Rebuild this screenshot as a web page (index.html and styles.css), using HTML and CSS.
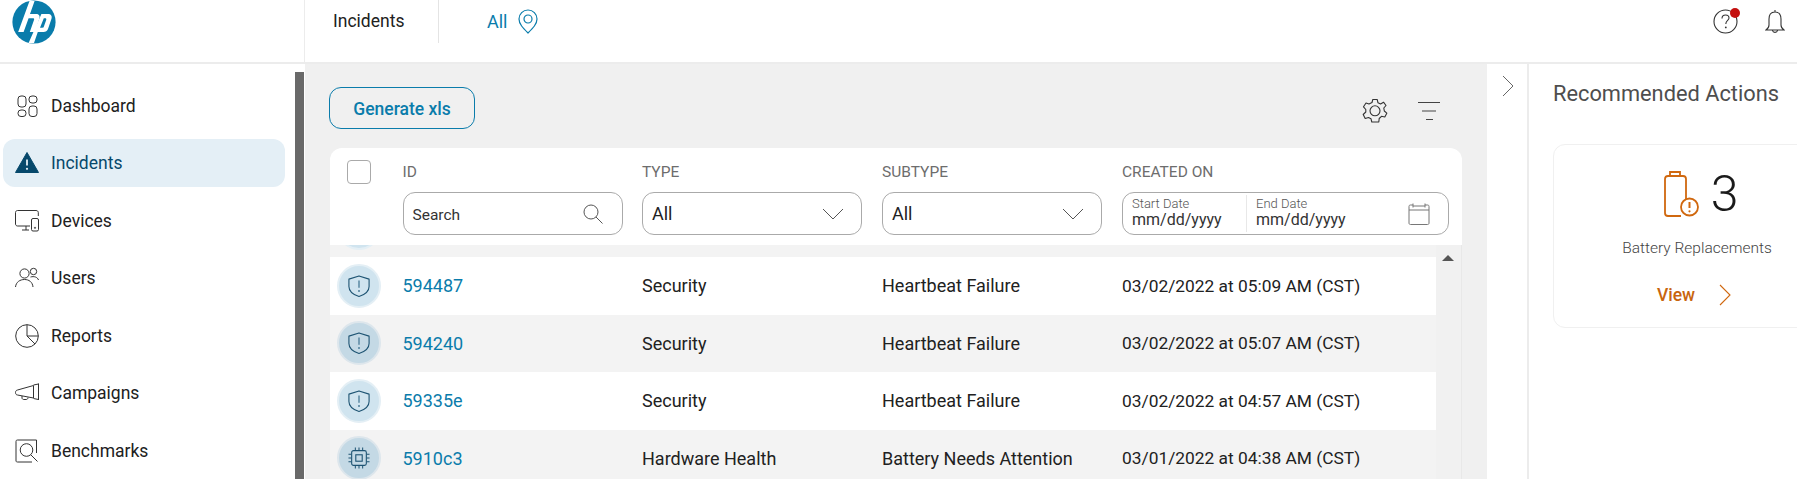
FILE: index.html
```html
<!DOCTYPE html>
<html lang="en">
<head>
<meta charset="utf-8">
<title>Incidents</title>
<link rel="stylesheet" href="styles.css">
</head>
<body>
<svg class="defs" width="0" height="0" aria-hidden="true">
  <symbol id="shield" viewBox="0 0 24 24">
    <path d="M12 1 L23 4.500 V12.500 C23 17.500 18 21.500 12 23.500 C6 21.500 1 17.500 1 12.500 V4.500 Z" fill="none" stroke="currentColor" stroke-width="1.200" stroke-linejoin="round"/>
    <path d="M12 6 V14" stroke="#4f7f9b" stroke-width="1.500" fill="none"/>
    <circle cx="12" cy="17.500" r="1.100" fill="#4f7f9b"/>
  </symbol>
  <symbol id="chip" viewBox="0 0 24 24">
    <rect x="4" y="4" width="16" height="16" rx="2" fill="none" stroke="currentColor" stroke-width="1.200"/>
    <rect x="8.500" y="8.500" width="7" height="7" fill="none" stroke="currentColor" stroke-width="1.200"/>
    <path d="M8 0.500V3.500M12 0.500V3.500M16 0.500V3.500M8 20.500V23.500M12 20.500V23.500M16 20.500V23.500M0.500 8H3.500M0.500 12H3.500M0.500 16H3.500M20.500 8H23.500M20.500 12H23.500M20.500 16H23.500" stroke="currentColor" stroke-width="1.100" fill="none"/>
  </symbol>
  <symbol id="chev-down" viewBox="0 0 22 12">
    <path d="M1 1 L11 11 L21 1" fill="none" stroke="currentColor" stroke-width="1"/>
  </symbol>
</svg>

<div class="app">
  <header class="topbar">
    <div class="brand">
      <svg class="logo" viewBox="0 0 44 44" width="44" height="44" role="img" aria-label="HP">
        <circle cx="22" cy="22" r="21.600" fill="#0a7cab"/>
        <path fill="#fff" d="M17.500 1 L22.600 1 L18 14 H24 C27 14 28.200 16 27.400 18.600 L22.800 32 H17.800 L22 20 C22.500 18.700 22 18.200 20.800 18.200 H16.600 L11.600 32 H6.200 Z"/>
        <path fill="#fff" fill-rule="evenodd" d="M29.400 14 H35.800 C39 14 40.400 16 39.400 19 L36 29 C35.300 31 33.600 32 31.600 32 H25.800 L22 43 H16.600 Z M31.800 18.200 L28 27.800 H30.400 C31.200 27.800 31.600 27.400 31.900 26.600 L34.200 20 C34.600 18.800 34.200 18.200 33.200 18.200 Z"/>
      </svg>
    </div>
    <div class="page-title">Incidents</div>
    <div class="location">
      <span>All</span>
      <svg viewBox="0 0 20 25" width="20" height="25"><path d="M10 24 C5 19 1 15 1 10 A9 9 0 0 1 19 10 C19 15 15 19 10 24 Z" fill="none" stroke="currentColor" stroke-width="1.200"/><circle cx="10" cy="10" r="4" fill="none" stroke="currentColor" stroke-width="1.200"/></svg>
    </div>
    <div class="top-actions">
      <div class="help">
        <svg viewBox="0 0 25 25" width="25" height="25"><circle cx="12.500" cy="12.500" r="11.500" fill="none" stroke="#333" stroke-width="1.100"/><path d="M9 9.500 C9 7 11 6 12.600 6 C14.600 6 16 7.400 16 9 C16 11.400 12.800 11.600 12.800 15" fill="none" stroke="#333" stroke-width="1.100"/><circle cx="12.800" cy="18.400" r="0.900" fill="#333"/></svg>
        <span class="dot"></span>
      </div>
      <svg viewBox="0 0 20 25" width="20" height="25"><path d="M10 1 V3 M10 3 C5.500 3 4 6.500 4 10 V16 C4 18.500 2.500 20 1 21 H19 C17.500 20 16 18.500 16 16 V10 C16 6.500 14.500 3 10 3 Z M7.500 21.500 C8 24 12 24 12.500 21.500" fill="none" stroke="#333" stroke-width="1.100"/></svg>
    </div>
  </header>

  <div class="content">
    <aside class="sidebar">
      <nav class="nav">
        <a class="nav-item">
          <svg viewBox="0 0 24 24" width="24" height="24"><rect x="3" y="2" width="8" height="11" rx="3"/><rect x="14" y="2" width="8" height="7" rx="3"/><rect x="3" y="16" width="8" height="6.500" rx="3"/><rect x="14" y="12" width="8" height="10.500" rx="3"/></svg>
          Dashboard
        </a>
        <a class="nav-item active">
          <svg viewBox="0 0 24 24" width="24" height="24"><path class="solid" d="M12 1.500 L23.500 21.500 H0.500 Z"/><path d="M12 8.500 V14.500" stroke="#e4eff6" stroke-width="1.800"/><circle cx="12" cy="17.800" r="1.100" fill="#e4eff6" stroke="none"/></svg>
          Incidents
        </a>
        <a class="nav-item">
          <svg viewBox="0 0 24 24" width="24" height="24"><path d="M15 17 H2.500 C1.500 17 0.500 16.200 0.500 15 V3.500 C0.500 2.300 1.500 1.500 2.500 1.500 H21 C22.300 1.500 23.300 2.300 23.300 3.500 V7"/><path d="M11 17 V21 M7 21 H14"/><rect x="16.500" y="9.500" width="7" height="12.500" rx="1.500"/><circle cx="20" cy="18.800" r="0.600"/></svg>
          Devices
        </a>
        <a class="nav-item">
          <svg viewBox="0 0 24 24" width="24" height="24"><circle cx="9.500" cy="7.500" r="4.600"/><circle cx="18.500" cy="5.500" r="3.200"/><path d="M0.500 21 C1 16 5 13.500 9.500 13.500 C14 13.500 17.500 16 18 21"/><path d="M15.500 11 C19 10 22.500 11 23.500 14"/></svg>
          Users
        </a>
        <a class="nav-item">
          <svg viewBox="0 0 24 24" width="24" height="24"><circle cx="12" cy="12" r="11.300"/><path d="M12 0.700 V12 H23.300 M12 12 L20 20"/></svg>
          Reports
        </a>
        <a class="nav-item">
          <svg viewBox="0 0 24 24" width="24" height="24"><path d="M18.500 4.500 L2.500 9 C1.200 9.400 0.500 10 0.500 11.500 C0.500 13 1.200 13.800 2.500 14 L18.500 17 Z M23.500 2.500 V19 M18.500 4 L23.500 3 M18.500 17.500 L23.500 18.500"/><path d="M7 15 V17 C7 18 8 18.500 9 18.500 H11 C12 18.500 13 18 13 16.500"/></svg>
          Campaigns
        </a>
        <a class="nav-item">
          <svg viewBox="0 0 24 24" width="24" height="24"><path d="M21.500 14 V1 H2.500 C1.500 1 1 1.500 1 2.500 V22 C1 22.500 1.500 23 2.500 23 H17"/><circle cx="11.500" cy="11" r="6.300"/><path d="M16 16 L22.500 22.500"/></svg>
          Benchmarks
        </a>
      </nav>
      <div class="side-thumb"></div>
    </aside>

    <main class="main">
      <div class="toolbar">
        <button class="btn-outline" type="button">Generate xls</button>
        <div class="tools">
          <svg viewBox="0 0 26 26" width="26" height="26"><path d="M10.800 1.500 H15.200 L16 4.800 L18.600 6 L21.500 4.200 L24 7.500 L21.800 10 L22.300 13 L24.800 15.200 L22.800 19 L19.500 18.300 L17.200 20.500 L16.800 24 H9.800 L9 20.800 L6.500 19.500 L3.200 20.500 L1.200 16.500 L3.800 14 V11.500 L1.500 8.800 L4 5 L7 6 L10 4.500 Z" fill="none" stroke="#333" stroke-width="1.100" stroke-linejoin="round"/><circle cx="13" cy="12.800" r="5" fill="none" stroke="#333" stroke-width="1.100"/></svg>
          <svg viewBox="0 0 24 20" width="24" height="20"><path d="M1 1.500 H23 M5 10 H19 M9 18.500 H16" stroke="#444" stroke-width="1.200" fill="none"/></svg>
        </div>
      </div>

      <section class="card">
        <div class="table-head">
          <div class="check-cell"><span class="checkbox"></span></div>
          <div class="col-head">
            <div class="col-label">ID</div>
            <div class="field field-search">
              <span class="placeholder">Search</span>
              <svg viewBox="0 0 20 20" width="20" height="20"><circle cx="8" cy="8" r="7" fill="none" stroke="#555" stroke-width="1"/><path d="M13 13 L19.500 19.500" stroke="#555" stroke-width="1"/></svg>
            </div>
          </div>
          <div class="col-head">
            <div class="col-label">TYPE</div>
            <div class="field">
              <span>All</span>
              <svg class="chev" width="22" height="12"><use href="#chev-down"/></svg>
            </div>
          </div>
          <div class="col-head">
            <div class="col-label">SUBTYPE</div>
            <div class="field">
              <span>All</span>
              <svg class="chev" width="22" height="12"><use href="#chev-down"/></svg>
            </div>
          </div>
          <div class="col-head">
            <div class="col-label">CREATED ON</div>
            <div class="field field-date">
              <div class="date-part">
                <span class="date-label">Start Date</span>
                <span class="date-value">mm/dd/yyyy</span>
              </div>
              <div class="date-part date-end">
                <span class="date-label">End Date</span>
                <span class="date-value">mm/dd/yyyy</span>
              </div>
              <svg viewBox="0 0 22 22" width="22" height="22"><path d="M5 2 H2.500 C1.500 2 1 2.500 1 3.500 V20 C1 21 1.500 21.500 2.500 21.500 H19.500 C20.500 21.500 21 21 21 20 V3.500 C21 2.500 20.500 2 19.500 2 H17 M5 0.500 V4.500 M17 0.500 V4.500 M5 3 H17 M1 7 H21" fill="none" stroke="#777" stroke-width="1"/></svg>
            </div>
          </div>
        </div>

        <div class="table-body">
          <div class="rows">
            <div class="row row-partial"><span class="row-icon"></span></div>
            <div class="row">
              <span class="row-icon"><svg width="22" height="24"><use href="#shield"/></svg></span>
              <a class="row-id">594487</a><span>Security</span><span>Heartbeat Failure</span><span class="row-date">03/02/2022 at 05:09 AM (CST)</span>
            </div>
            <div class="row row-alt">
              <span class="row-icon"><svg width="22" height="24"><use href="#shield"/></svg></span>
              <a class="row-id">594240</a><span>Security</span><span>Heartbeat Failure</span><span class="row-date">03/02/2022 at 05:07 AM (CST)</span>
            </div>
            <div class="row">
              <span class="row-icon"><svg width="22" height="24"><use href="#shield"/></svg></span>
              <a class="row-id">59335e</a><span>Security</span><span>Heartbeat Failure</span><span class="row-date">03/02/2022 at 04:57 AM (CST)</span>
            </div>
            <div class="row row-alt">
              <span class="row-icon"><svg width="22" height="22"><use href="#chip"/></svg></span>
              <a class="row-id">5910c3</a><span>Hardware Health</span><span>Battery Needs Attention</span><span class="row-date">03/01/2022 at 04:38 AM (CST)</span>
            </div>
          </div>
          <div class="track"><span class="track-arrow"></span></div>
        </div>
      </section>
    </main>

    <div class="collapse">
      <svg viewBox="0 0 12 22" width="12" height="22"><path d="M1 1 L11 11 L1 21" fill="none" stroke="#666" stroke-width="1"/></svg>
    </div>

    <aside class="panel">
      <h2 class="panel-title">Recommended Actions</h2>
      <div class="action-card">
        <div class="action-top">
          <svg viewBox="0 0 36 46" width="36" height="46" fill="none" stroke="#d0680f" stroke-width="1.800"><path d="M6 1 H16 V5 H6 Z"/><path d="M22 28 V8 C22 6 20.500 5 19 5 H4 C2 5 1 6 1 8 V42 C1 44 2 45 4 45 H17"/><circle cx="25.500" cy="36" r="8.500"/><path d="M25.500 31 V37" stroke-width="2"/><circle cx="25.500" cy="40.300" r="1.100" fill="#d0680f" stroke="none"/></svg>
          <span class="action-count">3</span>
        </div>
        <div class="action-label">Battery Replacements</div>
        <a class="action-link">
          <span>View</span>
          <svg viewBox="0 0 12 22" width="12" height="22"><path d="M1 1 L11 11 L1 21" fill="none" stroke="#d0680f" stroke-width="1.100"/></svg>
        </a>
      </div>
    </aside>
  </div>
</div>
</body>
</html>
```

FILE: styles.css
```css
* { box-sizing: border-box; }

html, body {
  margin: 0;
  height: 479px;
  overflow: hidden;
  background: #fff;
  font-family: Roboto, "Liberation Sans", sans-serif;
  font-size: 18px;
  color: #212121;
}

.defs { display: block; height: 0; }

.app { display: flex; flex-direction: column; height: 479px; overflow: hidden; }

/* top bar */
.topbar {
  display: flex;
  flex: 0 0 64px;
  height: 64px;
  border-bottom: 2px solid #ececec;
  align-items: flex-start;
}
.brand {
  flex: 0 0 305px;
  height: 62px;
  border-right: 1px solid #ececec;
  padding-left: 12px;
}
.logo { display: block; }
.page-title {
  width: 106px;
  height: 43px;
  margin-left: 28px;
  line-height: 42px;
  font-size: 17.500px;
  border-right: 1px solid #e4e4e4;
}
.location {
  display: flex;
  align-items: center;
  gap: 10px;
  margin-left: 48px;
  height: 42px;
  color: #0a7cab;
}
.top-actions {
  display: flex;
  gap: 27px;
  margin-left: auto;
  padding: 9px 12px 0 0;
}
.help { position: relative; width: 25px; height: 25px; }
.help svg, .top-actions svg { display: block; }
.dot {
  position: absolute;
  top: -1px;
  right: -2px;
  width: 10px;
  height: 10px;
  border-radius: 50%;
  background: #c4100f;
}

/* layout */
.content { display: flex; flex: 1; min-height: 0; }

/* sidebar */
.sidebar { display: flex; flex: 0 0 305px; }
.nav {
  display: flex;
  flex-direction: column;
  gap: 9.600px;
  width: 282px;
  margin-left: 3px;
  padding-top: 17px;
}
.nav-item {
  display: flex;
  flex: 0 0 48px;
  align-items: center;
  gap: 12px;
  padding: 1px 0 0 12px;
  border-radius: 12px;
  font-size: 17.500px;
}
.nav-item svg {
  fill: none;
  stroke: #333;
  stroke-width: 1;
  flex: none;
}
.nav-item.active { background: #e4eff6; color: #06486b; }
.nav-item .solid { fill: #06486b; stroke: #06486b; stroke-linejoin: round; }
.side-thumb {
  width: 9px;
  margin: 8px 0 0 10px;
  background: #696969;
}

/* main */
.main {
  flex: 0 0 1182px;
  padding: 23px 25px 0;
  background: #f0f0f0;
  overflow: hidden;
}
.toolbar {
  display: flex;
  align-items: center;
  justify-content: space-between;
  height: 42px;
  margin-left: -1px;
  padding-right: 21px;
}
.btn-outline {
  width: 146px;
  height: 42px;
  padding: 2px 0 0;
  border: 1px solid #0a7cab;
  border-radius: 12px;
  background: transparent;
  color: #0a7cab;
  font: 500 17.500px Roboto, "Liberation Sans", sans-serif;
}
.tools { display: flex; align-items: center; gap: 29px; margin-top: 6px; }
.tools svg { display: block; }

.card {
  margin-top: 19px;
  border-radius: 12px 12px 0 0;
  background: #fff;
  height: 340px;
}
.table-head {
  display: grid;
  grid-template-columns: 72.500px 239.500px 240px 240px 1fr;
  height: 97px;
}
.check-cell { padding: 12px 0 0 17px; }
.checkbox {
  display: block;
  width: 24px;
  height: 24px;
  border: 1px solid #aaa;
  border-radius: 4px;
}
.col-label {
  height: 44px;
  padding-top: 14px;
  line-height: 20px;
  font-size: 15.500px;
  color: #6d6d6d;
}
.col-head .field { width: 220px; }
.field {
  display: flex;
  align-items: center;
  justify-content: space-between;
  height: 43px;
  padding: 0 17px 0 9px;
  border: 1px solid #aaa;
  border-radius: 12px;
  background: #fff;
}
.col-head .field-search { padding-right: 19px; }
.field svg { flex: none; display: block; }
.chev { color: #555; }
.placeholder { font-size: 15.500px; color: #333; position: relative; top: 1px; }
.col-head .field-date { width: 327px; padding: 0 18px 0 9px; justify-content: flex-start; }
.field-date > svg { margin-left: auto; }
.date-part { display: flex; flex-direction: column; width: 114px; height: 37px; line-height: 16px; padding-top: 1px; }
.date-end { width: 125px; padding-left: 9px; border-left: 1px solid #e8e8e8; }
.date-label { font-size: 13px; font-weight: 300; color: #555; }
.date-value { font-size: 16px; color: #333; }

.table-body { display: flex; }
.rows { flex: 1; min-width: 0; }
.row {
  display: grid;
  grid-template-columns: 72.500px 239.500px 240px 240px 1fr;
  align-items: center;
  height: 57.500px;
  background: #fff;
}
.row-alt { background: #f3f3f3; }
.row-icon {
  display: flex;
  align-items: center;
  justify-content: center;
  width: 44px;
  height: 44px;
  margin-left: 7px;
  border: 2px solid #e4eff5;
  border-radius: 50%;
  background: #d0e4ef;
  color: #1e5473;
}
.row-alt .row-icon { background: #c4d9e5; border-color: #dde6ec; }
.row-partial {
  height: 12px;
  overflow: hidden;
  background: #f3f3f3;
  align-items: start;
}
.row-partial .row-icon { margin-top: -39px; }
.row-id { color: #0a7cab; }
.row-date { font-size: 17.350px; }
.track {
  flex: 0 0 26px;
  background: #f1f1f1;
  padding-top: 10px;
  border-right: 1px solid #e8e8e8;
}
.track-arrow {
  display: block;
  width: 0;
  height: 0;
  margin-left: 6px;
  border: 6px solid transparent;
  border-top: 0;
  border-bottom: 6px solid #555;
}

/* collapse strip */
.collapse {
  flex: 0 0 42px;
  padding: 11px 0 0 15px;
  border-right: 2px solid #ececec;
}
.collapse svg { display: block; }

/* right panel */
.panel {
  flex: 1;
  min-width: 0;
  padding: 0 0 0 24px;
  overflow: hidden;
}
.panel-title {
  margin: 0;
  padding-top: 16px;
  height: 80px;
  line-height: 28px;
  font-size: 21.800px;
  font-weight: 400;
  color: #4e4e4e;
}
.action-card {
  display: flex;
  flex-direction: column;
  align-items: center;
  width: 288px;
  height: 184px;
  padding-top: 25px;
  border: 1px solid #f0f0f0;
  border-radius: 12px;
}
.action-top { display: flex; align-items: center; gap: 11px; height: 48px; margin-left: 8px; }
.action-top svg { display: block; }
.action-count { font-size: 50px; font-weight: 300; line-height: 48px; color: #1a1a1a; }
.action-label { margin-top: 20px; line-height: 20px; font-size: 15.500px; font-weight: 300; color: #444; }
.action-link {
  display: flex;
  align-items: center;
  gap: 24px;
  margin: 26px 6px 0 0;
  color: #c8650e;
  font-size: 17.500px;
  font-weight: 500;
}
.action-link svg { display: block; }
```
